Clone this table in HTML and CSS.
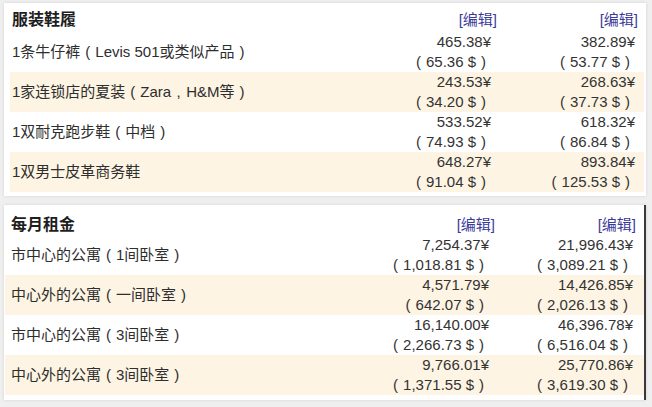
FILE: index.html
```html
<!DOCTYPE html>
<html lang="zh">
<head>
<meta charset="utf-8">
<title>生活成本</title>
<link rel="stylesheet" href="styles.css">
</head>
<body>
<section class="panel panel-clothes">
  <div class="row head">
    <div class="title">服装鞋履</div>
    <div class="cell edit">[编辑]</div>
    <div class="cell edit">[编辑]</div>
  </div>
  <div class="row">
    <div class="label">1条牛仔裤<i class="p">(</i>Levis 501或类似产品<i class="p">)</i></div>
    <div class="cell"><span>465.38¥</span><span><i class="p">(</i>65.36 $<i class="p">)</i></span></div>
    <div class="cell"><span>382.89¥</span><span><i class="p">(</i>53.77 $<i class="p">)</i></span></div>
  </div>
  <div class="row alt">
    <div class="label">1家连锁店的夏装<i class="p">(</i>Zara<i class="p">,</i>H&amp;M等<i class="p">)</i></div>
    <div class="cell"><span>243.53¥</span><span><i class="p">(</i>34.20 $<i class="p">)</i></span></div>
    <div class="cell"><span>268.63¥</span><span><i class="p">(</i>37.73 $<i class="p">)</i></span></div>
  </div>
  <div class="row">
    <div class="label">1双耐克跑步鞋<i class="p">(</i>中档<i class="p">)</i></div>
    <div class="cell"><span>533.52¥</span><span><i class="p">(</i>74.93 $<i class="p">)</i></span></div>
    <div class="cell"><span>618.32¥</span><span><i class="p">(</i>86.84 $<i class="p">)</i></span></div>
  </div>
  <div class="row alt">
    <div class="label">1双男士皮革商务鞋</div>
    <div class="cell"><span>648.27¥</span><span><i class="p">(</i>91.04 $<i class="p">)</i></span></div>
    <div class="cell"><span>893.84¥</span><span><i class="p">(</i>125.53 $<i class="p">)</i></span></div>
  </div>
</section>
<section class="panel panel-rent">
  <div class="row head">
    <div class="title">每月租金</div>
    <div class="cell edit">[编辑]</div>
    <div class="cell edit">[编辑]</div>
  </div>
  <div class="row">
    <div class="label">市中心的公寓<i class="p">(</i>1间卧室<i class="p">)</i></div>
    <div class="cell"><span>7,254.37¥</span><span><i class="p">(</i>1,018.81 $<i class="p">)</i></span></div>
    <div class="cell"><span>21,996.43¥</span><span><i class="p">(</i>3,089.21 $<i class="p">)</i></span></div>
  </div>
  <div class="row alt">
    <div class="label">中心外的公寓<i class="p">(</i>一间卧室<i class="p">)</i></div>
    <div class="cell"><span>4,571.79¥</span><span><i class="p">(</i>642.07 $<i class="p">)</i></span></div>
    <div class="cell"><span>14,426.85¥</span><span><i class="p">(</i>2,026.13 $<i class="p">)</i></span></div>
  </div>
  <div class="row">
    <div class="label">市中心的公寓<i class="p">(</i>3间卧室<i class="p">)</i></div>
    <div class="cell"><span>16,140.00¥</span><span><i class="p">(</i>2,266.73 $<i class="p">)</i></span></div>
    <div class="cell"><span>46,396.78¥</span><span><i class="p">(</i>6,516.04 $<i class="p">)</i></span></div>
  </div>
  <div class="row alt">
    <div class="label">中心外的公寓<i class="p">(</i>3间卧室<i class="p">)</i></div>
    <div class="cell"><span>9,766.01¥</span><span><i class="p">(</i>1,371.55 $<i class="p">)</i></span></div>
    <div class="cell"><span>25,770.86¥</span><span><i class="p">(</i>3,619.30 $<i class="p">)</i></span></div>
  </div>
</section>
</body>
</html>
```
FILE: styles.css
```css
html, body {
  margin: 0;
  padding: 0;
}
body {
  background: #efefef;
  width: 652px;
  height: 407px;
  overflow: hidden;
  padding: 3px 0 0 4px;
  box-sizing: border-box;
  font-family: "Liberation Sans", "Noto Sans CJK SC", sans-serif;
  font-size: 15px;
  color: #333;
}
.panel {
  background: #fff;
  width: 642px;
  box-sizing: border-box;
  box-shadow: 0 0 3px rgba(0, 0, 0, 0.12);
}
.panel-clothes {
  padding: 7px 2px 4px 6px;
}
.panel-rent {
  margin-top: 9px;
  padding: 10px 0 5px 1px;
  border-right: 2px solid #3a3a3a;
}
.row {
  display: grid;
  grid-template-columns: 1fr 141px 141px;
  align-items: center;
  height: 40px;
  padding: 0 6px 0 2px;
  line-height: 20px;
}
.panel-rent .row {
  padding: 0 8px 0 6px;
}
.row.head {
  height: 20px;
  margin-bottom: 2px;
}
.panel-rent .row.head {
  margin-bottom: 0;
}
.row.alt {
  background: #fdf4e3;
}
.title {
  font-size: 16px;
  font-weight: bold;
  color: #1e1e1e;
}
.label {
  color: #2e2e2e;
  white-space: nowrap;
}
.p {
  font-style: normal;
  display: inline-block;
  width: 15px;
  text-align: center;
}
.cell {
  display: flex;
  flex-direction: column;
  align-items: flex-end;
  padding-right: 6px;
  white-space: nowrap;
}
.cell + .cell {
  padding-right: 3px;
}
.cell.edit {
  padding-right: 0;
  color: #3b3b9a;
}
```
